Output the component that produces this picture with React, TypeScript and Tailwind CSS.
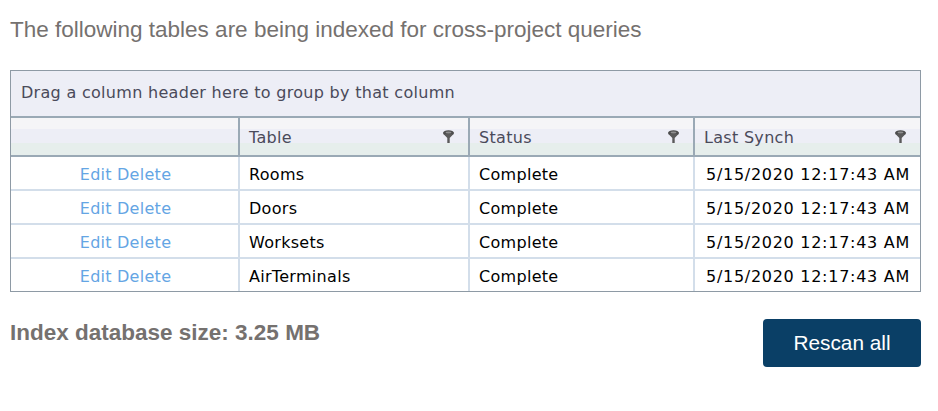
import React from 'react';

const rows = ['Rooms', 'Doors', 'Worksets', 'AirTerminals'];
const columns = 'grid grid-cols-[229px_230px_225px_225px]';

const FilterIcon = () => (
  <svg width="13" height="14" viewBox="0 0 13 14" className="block -mt-[1px]">
    <ellipse cx="6.5" cy="3" rx="5.5" ry="2.8" fill="#4d4d4d" />
    <path d="M1.5 4 L11.5 4 L7.7 8 L7.7 13 L5.3 13 L5.3 8 Z" fill="#5a5a5a" />
    <ellipse cx="6.5" cy="2.6" rx="3" ry="1" fill="#8f8f8f" />
  </svg>
);

const HeaderCell = ({ label, last = false }: { label?: string; last?: boolean }) => (
  <div className={`flex items-center justify-between h-[37px] pl-[9px] pt-[2px] text-[16px] tracking-[0.3px] text-[#4a4a5a] bg-[linear-gradient(#f5f5f7_0,#f5f5f7_11px,#edeef6_11px,#edeef6_25px,#e6eeec_25px)] ${last ? 'pr-[13px]' : 'pr-[13px] border-r-2 border-[#9aa9b5]'}`}>
    {label && <span>{label}</span>}
    {label && <FilterIcon />}
  </div>
);

export default function App() {
  return (
    <div className="w-[938px] h-[411px] bg-white px-[10px] pt-[16px] font-['Liberation_Sans',sans-serif] text-[#75716f]">
      <h2 className="text-[22.5px] leading-[28px]">The following tables are being indexed for cross-project queries</h2>

      <div className="mt-[26px] w-[911px] border border-[#8e9aa5] font-['DejaVu_Sans',sans-serif]">
        <div className="h-[47px] flex items-center pl-[10px] pb-[2px] bg-[#edeef6] text-[16px] tracking-[0.3px] text-[#4a4a5a] border-b-2 border-[#9aa9b5]">
          Drag a column header here to group by that column
        </div>
        <div className={`${columns} border-b-2 border-[#9aa9b5]`}>
          <HeaderCell />
          <HeaderCell label="Table" />
          <HeaderCell label="Status" />
          <HeaderCell label="Last Synch" last />
        </div>
        {rows.map((name, i) => (
          <div key={name} className={`${columns} text-[16px] tracking-[0.3px] text-black ${i < rows.length - 1 ? 'h-[34px] border-b-2 border-[#d3deea]' : 'h-[32px]'}`}>
            <div className="flex items-center justify-center gap-[5px] pl-[2px] pt-[4px] border-r-2 border-[#d3deea] text-[#64a5e4]">
              <span>Edit</span>
              <span>Delete</span>
            </div>
            <div className="flex items-center pl-[9px] pt-[4px] border-r-2 border-[#d3deea]">{name}</div>
            <div className="flex items-center pl-[9px] pt-[4px] border-r-2 border-[#d3deea]">Complete</div>
            <div className="flex items-center pl-[11px] pt-[4px] tracking-[0.72px]">5/15/2020 12:17:43 AM</div>
          </div>
        ))}
      </div>

      <div className="mt-[27px] w-[911px] flex items-start justify-between">
        <div className="text-[22.5px] leading-[28px] font-bold">Index database size: 3.25 MB</div>
        <button className="w-[158px] h-[48px] rounded-[4px] bg-[#0a3f66] text-white text-[20.8px]">Rescan all</button>
      </div>
    </div>
  );
}
